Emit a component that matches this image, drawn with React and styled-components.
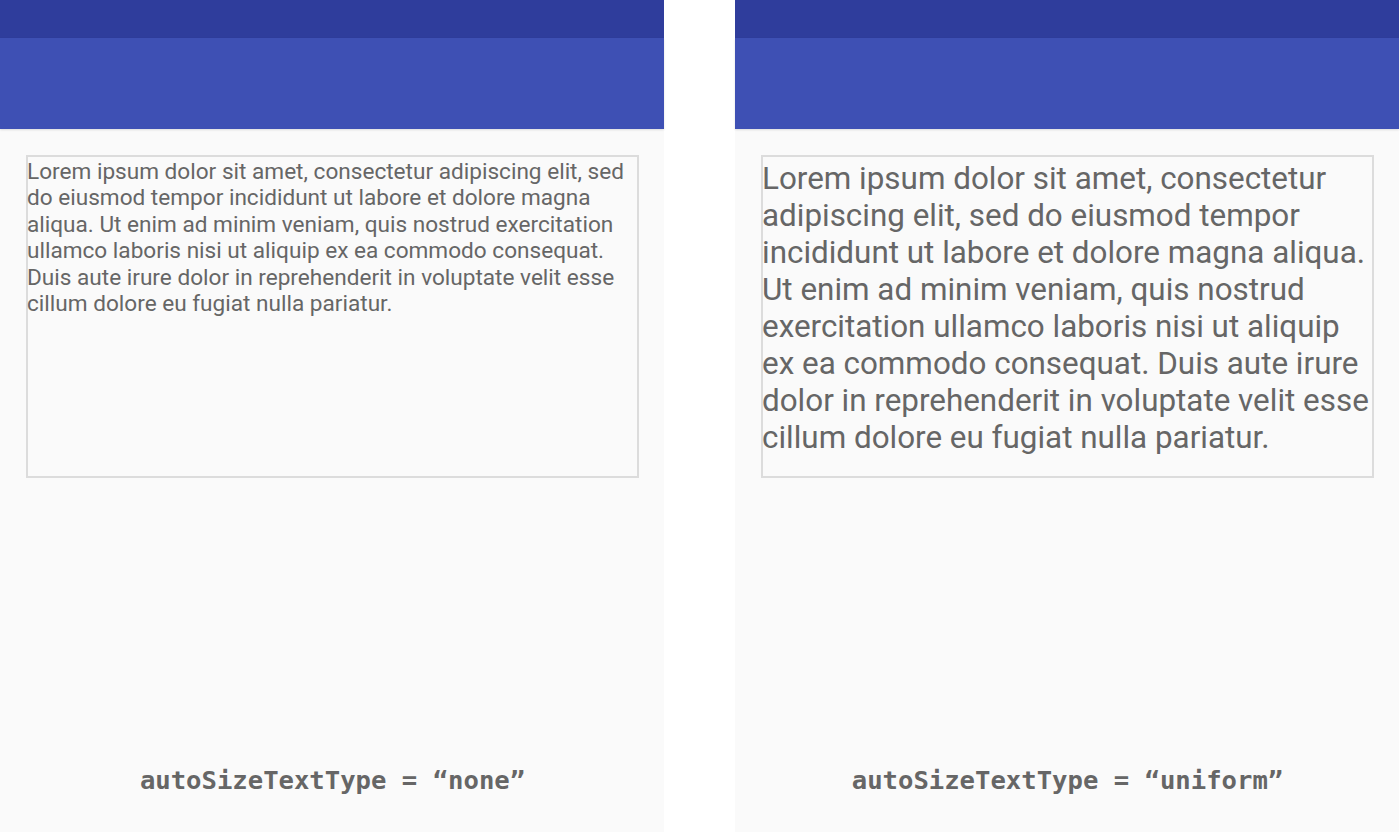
import React from "react";
import styled, {createGlobalStyle} from "styled-components";

const lorem = "Lorem ipsum dolor sit amet, consectetur adipiscing elit, sed do eiusmod tempor incididunt ut labore et dolore magna aliqua. Ut enim ad minim veniam, quis nostrud exercitation ullamco laboris nisi ut aliquip ex ea commodo consequat. Duis aute irure dolor in reprehenderit in voluptate velit esse cillum dolore eu fugiat nulla pariatur.";

const GlobalStyle = createGlobalStyle`
  html, body {
    margin: 0;
    padding: 0;
    background: #ffffff;
  }
`;

const Page = styled.div`
  width: 1400px;
  height: 832px;
  display: flex;
  gap: 71px;
  overflow: hidden;
  background: #ffffff;
`;

const Phone = styled.div`
  width: 664px;
  flex-shrink: 0;
  height: 832px;
  display: flex;
  flex-direction: column;
  background: #fafafa;
`;

const StatusBar = styled.div`
  height: 38px;
  background: #2f3d9c;
`;

const Toolbar = styled.div`
  height: 91px;
  background: #3e50b4;
  box-shadow: 0 1px 2px rgba(0, 0, 0, 0.12);
`;

const Content = styled.div`
  flex: 1;
  display: flex;
  flex-direction: column;
  align-items: center;
  padding: 26px 25px 0 26px;
`;

const TextBox = styled.div`
  box-sizing: border-box;
  width: 613px;
  height: 323px;
  align-self: flex-start;
  box-shadow: inset 0 0 0 2px #dcdcdc;
  padding: ${(p) => p.pt}px 0 0 1px;
  font-family: Roboto, "Noto Sans", sans-serif;
  color: #666666;
  font-size: ${(p) => p.size}px;
  line-height: ${(p) => p.lh}px;
  overflow: hidden;
`;

const Label = styled.div`
  margin-top: auto;
  margin-bottom: 37px;
  font-family: "DejaVu Sans Mono", "Liberation Mono", monospace;
  font-weight: bold;
  font-size: 25.6px;
  line-height: 30px;
  color: #666666;
  text-align: center;
`;

const Panel = ({size, lh, pt, mode}) => (
    <Phone>
        <StatusBar/>
        <Toolbar/>
        <Content>
            <TextBox size={size} lh={lh} pt={pt}>{lorem}</TextBox>
            <Label>autoSizeTextType = “{mode}”</Label>
        </Content>
    </Phone>
);

export default function App() {
    return (
        <>
            <GlobalStyle/>
            <Page>
                <Panel size={22.6} lh={26.4} pt={4} mode="none"/>
                <Panel size={31.4} lh={37} pt={5} mode="uniform"/>
            </Page>
        </>
    );
}
